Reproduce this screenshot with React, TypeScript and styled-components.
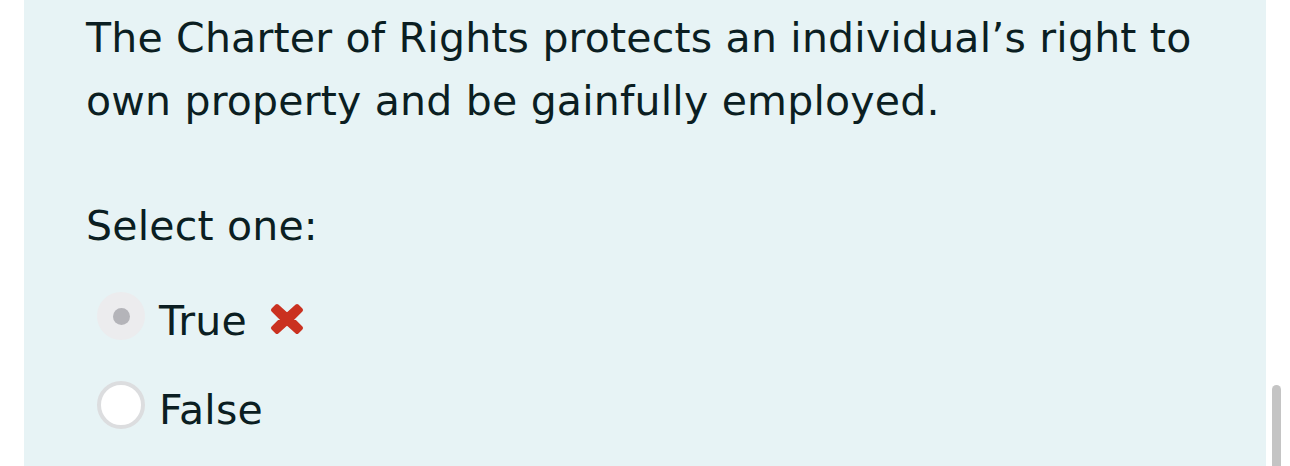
import React from 'react';
import styled, { createGlobalStyle } from 'styled-components';

const GlobalStyle = createGlobalStyle`
  html, body {
    margin: 0;
    padding: 0;
    background: #ffffff;
    overflow: hidden;
  }
`;

const Page = styled.div`
  height: 466px;
  padding: 0 24px;
  display: flex;
`;

const QuestionPanel = styled.section`
  flex: 1;
  max-width: 1242px;
  background: #e7f3f5;
  padding: 7px 62px 0;
  box-sizing: border-box;
  color: #0b1e22;
  font-family: 'DejaVu Sans', 'Open Sans', sans-serif;
  font-size: 41px;
  line-height: 63px;
  letter-spacing: 0.2px;
`;

const QuestionText = styled.p`
  margin: 0;
`;

const Prompt = styled.p`
  margin: 62px 0 0;
`;

const Options = styled.div`
  display: flex;
  flex-direction: column;
  gap: 26px;
  margin-top: 32px;
  padding-left: 11px;
`;

const OptionRow = styled.label`
  display: flex;
  align-items: flex-start;
  gap: 14px;
  height: 63px;
`;

const Radio = styled.span<{ checked?: boolean }>`
  flex: none;
  width: 48px;
  height: 48px;
  margin-top: 2px;
  border-radius: 50%;
  box-sizing: border-box;
  display: flex;
  align-items: center;
  justify-content: center;
  background: ${(p) => (p.checked ? '#ececee' : '#ffffff')};
  border: ${(p) => (p.checked ? 'none' : '4px solid #dcdddf')};

  &::after {
    content: '';
    display: ${(p) => (p.checked ? 'block' : 'none')};
    width: 17px;
    height: 17px;
    border-radius: 50%;
    background: #b4b4b9;
  }
`;

const WrongMark = styled.svg`
  flex: none;
  width: 34px;
  height: 32px;
  margin: 13px 0 0 9px;
`;

const ScrollThumb = styled.div`
  position: fixed;
  right: 9px;
  top: 385px;
  width: 9px;
  height: 90px;
  border-radius: 5px 5px 0 0;
  background: #c4c4c4;
`;

const App = () => {
  return (
    <>
      <GlobalStyle />
      <Page>
        <QuestionPanel>
          <QuestionText>
            The Charter of Rights protects an individual’s right to own property and be gainfully employed.
          </QuestionText>
          <Prompt>Select one:</Prompt>
          <Options>
            <OptionRow>
              <Radio checked />
              True
              <WrongMark viewBox="0 0 34 32">
                <path
                  d="M3 7 L7 3 L17 12 L27 3 L31 7 L22 16 L31 25 L27 29 L17 20 L7 29 L3 25 L12 16 Z"
                  fill="#ca3120"
                  stroke="#ca3120"
                  strokeWidth="4"
                  strokeLinejoin="round"
                />
              </WrongMark>
            </OptionRow>
            <OptionRow>
              <Radio />
              False
            </OptionRow>
          </Options>
        </QuestionPanel>
      </Page>
      <ScrollThumb />
    </>
  );
};

export default App;
